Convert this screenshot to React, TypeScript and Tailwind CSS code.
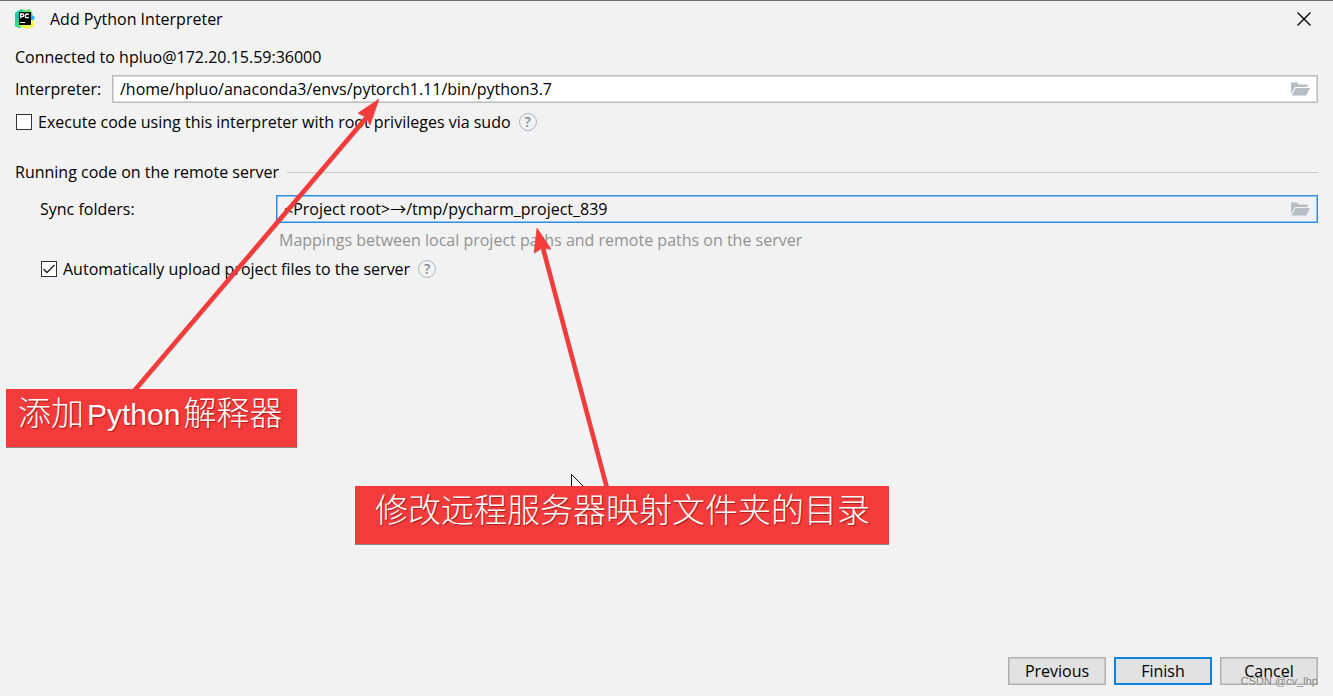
import { X } from 'lucide-react';

function PyCharmLogo() {
  return (
    <svg width="20" height="20" viewBox="0 0 20 20" aria-hidden="true">
      <path d="M0 4 L6 0 L11 2 L10 14 L5 19 L0 17 Z" fill="#21d789" />
      <path d="M0 4 L3 2 L5 8 L0 12 Z" fill="#18c9b2" />
      <path d="M9 2 L14 0 L17 3 L18 10 L8 8 Z" fill="#5fe85a" />
      <path d="M0 13 L5 12 L7 18 L4 19 L0 17 Z" fill="#2fdc8a" />
      <path d="M4 17 L8 14 L17 14 L18 18 L13 20 L9 19 Z" fill="#e6f355" />
      <path d="M15 5 L20 8 L18 12 L15 12 Z" fill="#1db4f0" />
      <path d="M15 11 L18 11 L20 17 L15 18 Z" fill="#fcf84a" />
      <rect x="4" y="3" width="12" height="13" fill="#000" />
      <path
        d="M5.7 9.2 V5 H7.2 Q8.8 5 8.8 6.300 Q8.8 7.6 7.2 7.6 H5.7 M13.8 5.6 Q13 5 12 5 Q10.3 5.2 10.3 7 Q10.3 8.700 12 8.900 Q13 8.900 13.8 8.300"
        fill="none"
        stroke="#fff"
        strokeWidth="1.3"
      />
      <rect x="5" y="13" width="5" height="1" fill="#fff" />
    </svg>
  );
}

function FolderIcon() {
  return (
    <svg width="19" height="14" viewBox="0 0 19 14" aria-hidden="true">
      <path d="M0 0.5 H6 L8 2.5 H16.5 V5 H4 L0 12 Z" fill="#b7bec4" />
      <path d="M4.6 6 H19 L15.2 13.5 H0.6 Z" fill="#b7bec4" />
    </svg>
  );
}

function HelpButton({ label }: { label: string }) {
  return (
    <button
      aria-label={label}
      className="flex size-[18px] items-center justify-center rounded-full border border-[#adb5bb] font-['Open_Sans',sans-serif] text-sm leading-4 font-semibold text-[#7f8b92]"
    >
      ?
    </button>
  );
}

function Checkbox({ id, label, checked = false }: { id: string; label: string; checked?: boolean }) {
  return (
    <div className="flex items-center gap-[6px] pl-px">
      <span className="relative flex">
        <input
          id={id}
          type="checkbox"
          defaultChecked={checked}
          className="peer size-4 appearance-none border border-[#333] bg-white"
        />
        <svg
          viewBox="0 0 16 16"
          className="pointer-events-none absolute inset-0 hidden size-4 peer-checked:block"
          aria-hidden="true"
        >
          <path d="M2.5 8 L6 11.5 L13.5 4" fill="none" stroke="#222" strokeWidth="1.4" />
        </svg>
      </span>
      <label htmlFor={id}>{label}</label>
    </div>
  );
}

function Arrows() {
  return (
    <svg width="620" height="490" viewBox="0 0 620 490" className="pointer-events-none absolute top-0 left-0" aria-hidden="true">
      <g fill="#f33b3b" stroke="#f33b3b" className="drop-shadow-[0_1px_0_#8886]">
        <path d="M134 390 L366 117" strokeWidth="4.5" />
        <path d="M379 98 L358 112 L366 116 L370 124 Z" strokeWidth="0.5" />
        <path d="M607 487 L543 247" strokeWidth="4.5" />
        <path d="M537 227 L534 252 L542 247 L551 248 Z" strokeWidth="0.5" />
      </g>
      <path d="M571.5 488 V473.5 L584 486" fill="#fff" stroke="#111" />
    </svg>
  );
}

const calloutClass =
  "absolute border-b border-[#888] bg-[#f33b3b] font-['Liberation_Sans','Noto_Sans_CJK_SC',sans-serif] text-[33px] leading-[50px] font-light whitespace-nowrap text-white [text-shadow:1px_1px_1px_#6008]";

const fieldClass = 'flex h-7 flex-1 items-center border pr-[7px] inset-ring';
const buttonClass = 'h-7 w-[98px] border bg-[#e2e2e2] leading-6 inset-ring';

export default function App() {
  return (
    <div className="relative flex min-h-screen flex-col overflow-hidden border-t border-[#6e6a6c] bg-[#f2f2f2] font-['Open_Sans','Noto_Sans_CJK_SC',sans-serif] text-base leading-6 text-black">
      <header className="flex h-9 items-center justify-between pr-[17px] pl-[15px]">
        <div className="flex items-center gap-[15px]">
          <PyCharmLogo />
          <h1>Add Python Interpreter</h1>
        </div>
        <button aria-label="Close">
          <X size={24} strokeWidth={1.4} />
        </button>
      </header>

      <main className="flex flex-1 flex-col px-[15px]">
        <p className="mt-2">Connected to hpluo@172.20.15.59:36000</p>

        <div className="mt-[6px] flex items-center">
          <label htmlFor="interpreter" className="w-[97px]">Interpreter:</label>
          <div className={`${fieldClass} border-[#bdbdbd] bg-white inset-ring-[#dadada]`}>
            <input
              id="interpreter"
              defaultValue="/home/hpluo/anaconda3/envs/pytorch1.11/bin/python3.7"
              className="min-w-0 flex-1 bg-transparent px-[7px] outline-none"
            />
            <button aria-label="Browse interpreter">
              <FolderIcon />
            </button>
          </div>
        </div>

        <div className="mt-[7px] flex items-center gap-2">
          <Checkbox id="sudo" label="Execute code using this interpreter with root privileges via sudo" />
          <HelpButton label="About root privileges" />
        </div>

        <div className="mt-[26px] flex items-center gap-2">
          <h2>Running code on the remote server</h2>
          <hr className="flex-1 border-[#cbcbcb]" />
        </div>

        <div className="mt-[11px] flex items-center pl-[25px]">
          <label htmlFor="sync" className="w-[236px]">Sync folders:</label>
          <div className={`${fieldClass} border-[#2b8ddd] inset-ring-[#8cc0ea]`}>
            <input
              id="sync"
              defaultValue="<Project root>→/tmp/pycharm_project_839"
              className="min-w-0 flex-1 bg-transparent px-[7px] outline-none"
            />
            <button aria-label="Browse folders">
              <FolderIcon />
            </button>
          </div>
        </div>

        <p className="mt-[5px] pl-[264px] text-[#929292]">
          Mappings between local project paths and remote paths on the server
        </p>

        <div className="mt-[5px] flex items-center gap-2 pl-[25px]">
          <Checkbox id="upload" label="Automatically upload project files to the server" checked />
          <HelpButton label="About automatic upload" />
        </div>
      </main>

      <footer className="flex justify-end gap-2 pr-[15px] pb-[11px]">
        <button className={`${buttonClass} border-[#b0b0b0] inset-ring-[#c8c8c8]`}>Previous</button>
        <button className={`${buttonClass} border-[#0f80dc] inset-ring-[#0f80dc]`}>Finish</button>
        <button className={`${buttonClass} border-[#b0b0b0] inset-ring-[#c8c8c8]`}>Cancel</button>
      </footer>

      <Arrows />
      <div className={`${calloutClass} top-[388px] left-[6px] pr-[15px] pb-2 pl-3`}>
        添加<span className="px-[3px] text-3xl leading-[48px]">Python</span>解释器
      </div>
      <div className={`${calloutClass} top-[485px] left-[355px] pr-[19px] pb-2 pl-5`}>修改远程服务器映射文件夹的目录</div>
      <span className="pointer-events-none absolute right-[15px] bottom-[7px] font-['Liberation_Sans',sans-serif] text-[11px] leading-4 text-[#858585] [text-shadow:1px_1px_0_#fff8]">
        CSDN @cv_lhp
      </span>
    </div>
  );
}
